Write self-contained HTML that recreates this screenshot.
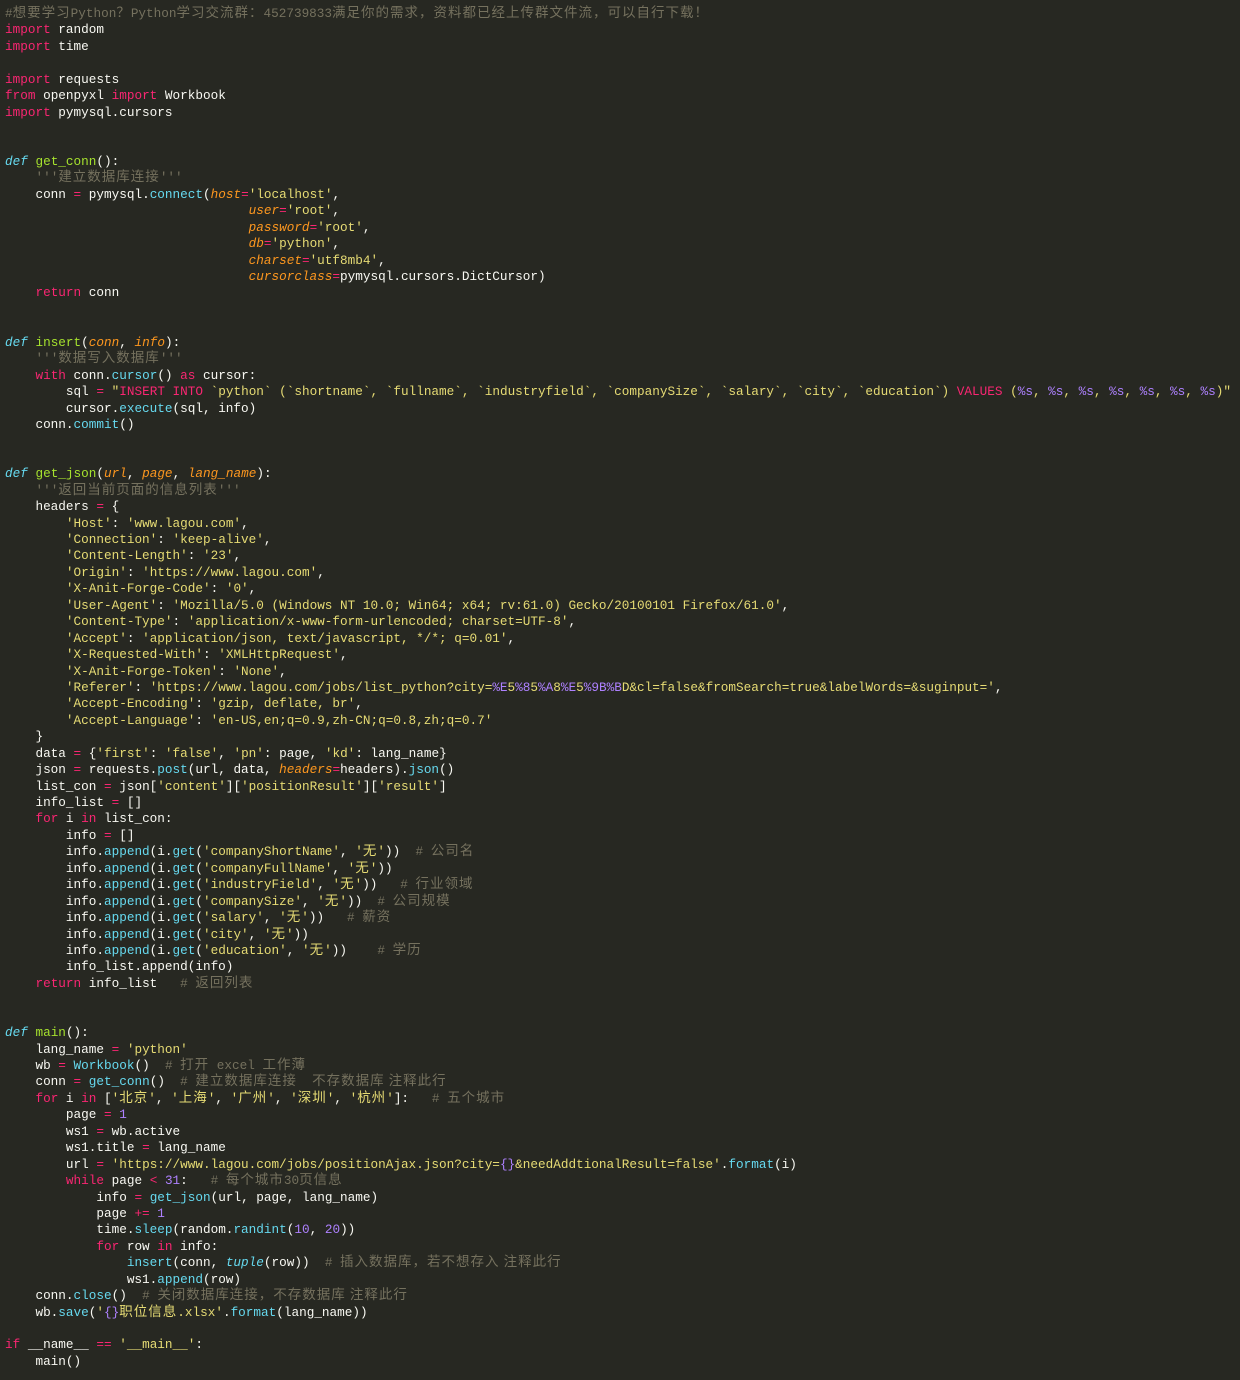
<!DOCTYPE html>
<html><head><meta charset="utf-8"><style>
html,body{margin:0;padding:0;background:#272822;width:1240px;height:1380px;overflow:hidden}
pre{margin:0;padding:6px 0 0 5px;font-family:"Liberation Mono","Noto Sans CJK SC",monospace;font-size:12.7px;line-height:16.44px;color:#f8f8f2;white-space:pre}
.k{color:#f92672}.b{color:#66d9ef}.s{color:#e6db74}.c{color:#75715e}.d{color:#66d9ef;font-style:italic}.f{color:#a6e22e}.p{color:#fd971f;font-style:italic}.n{color:#ae81ff}
.z{font-family:"Noto Sans CJK SC",sans-serif;font-size:13.5px;letter-spacing:1px;line-height:10px}
</style></head><body><pre><span class="c">#<span class="z">想要学习</span>Python<span class="z">？</span>Python<span class="z">学习交流群：</span>452739833<span class="z">满足你的需求，资料都已经上传群文件流，可以自行下载！</span></span>
<span class="k">import</span> random
<span class="k">import</span> time

<span class="k">import</span> requests
<span class="k">from</span> openpyxl <span class="k">import</span> Workbook
<span class="k">import</span> pymysql.cursors


<span class="d">def</span> <span class="f">get_conn</span>():
    <span class="c">'''<span class="z">建立数据库连接</span>'''</span>
    conn <span class="k">=</span> pymysql.<span class="b">connect</span>(<span class="p">host</span><span class="k">=</span><span class="s">'localhost'</span>,
                                <span class="p">user</span><span class="k">=</span><span class="s">'root'</span>,
                                <span class="p">password</span><span class="k">=</span><span class="s">'root'</span>,
                                <span class="p">db</span><span class="k">=</span><span class="s">'python'</span>,
                                <span class="p">charset</span><span class="k">=</span><span class="s">'utf8mb4'</span>,
                                <span class="p">cursorclass</span><span class="k">=</span>pymysql.cursors.DictCursor)
    <span class="k">return</span> conn


<span class="d">def</span> <span class="f">insert</span>(<span class="p">conn</span>, <span class="p">info</span>):
    <span class="c">'''<span class="z">数据写入数据库</span>'''</span>
    <span class="k">with</span> conn.<span class="b">cursor</span>() <span class="k">as</span> cursor:
        sql <span class="k">=</span> <span class="s">"<span class="k">INSERT INTO</span> `python` (`shortname`, `fullname`, `industryfield`, `companySize`, `salary`, `city`, `education`) <span class="k">VALUES</span> (<span class="n">%s</span>, <span class="n">%s</span>, <span class="n">%s</span>, <span class="n">%s</span>, <span class="n">%s</span>, <span class="n">%s</span>, <span class="n">%s</span>)"</span>
        cursor.<span class="b">execute</span>(sql, info)
    conn.<span class="b">commit</span>()


<span class="d">def</span> <span class="f">get_json</span>(<span class="p">url</span>, <span class="p">page</span>, <span class="p">lang_name</span>):
    <span class="c">'''<span class="z">返回当前页面的信息列表</span>'''</span>
    headers <span class="k">=</span> {
        <span class="s">'Host'</span>: <span class="s">'www.lagou.com'</span>,
        <span class="s">'Connection'</span>: <span class="s">'keep-alive'</span>,
        <span class="s">'Content-Length'</span>: <span class="s">'23'</span>,
        <span class="s">'Origin'</span>: <span class="s">'https://www.lagou.com'</span>,
        <span class="s">'X-Anit-Forge-Code'</span>: <span class="s">'0'</span>,
        <span class="s">'User-Agent'</span>: <span class="s">'Mozilla/5.0 (Windows NT 10.0; Win64; x64; rv:61.0) Gecko/20100101 Firefox/61.0'</span>,
        <span class="s">'Content-Type'</span>: <span class="s">'application/x-www-form-urlencoded; charset=UTF-8'</span>,
        <span class="s">'Accept'</span>: <span class="s">'application/json, text/javascript, */*; q=0.01'</span>,
        <span class="s">'X-Requested-With'</span>: <span class="s">'XMLHttpRequest'</span>,
        <span class="s">'X-Anit-Forge-Token'</span>: <span class="s">'None'</span>,
        <span class="s">'Referer'</span>: <span class="s">'https://www.lagou.com/jobs/list_python?city=<span class="n">%E</span>5<span class="n">%8</span>5<span class="n">%A</span>8<span class="n">%E</span>5<span class="n">%9B</span><span class="n">%B</span>D&amp;cl=false&amp;fromSearch=true&amp;labelWords=&amp;suginput='</span>,
        <span class="s">'Accept-Encoding'</span>: <span class="s">'gzip, deflate, br'</span>,
        <span class="s">'Accept-Language'</span>: <span class="s">'en-US,en;q=0.9,zh-CN;q=0.8,zh;q=0.7'</span>
    }
    data <span class="k">=</span> {<span class="s">'first'</span>: <span class="s">'false'</span>, <span class="s">'pn'</span>: page, <span class="s">'kd'</span>: lang_name}
    json <span class="k">=</span> requests.<span class="b">post</span>(url, data, <span class="p">headers</span><span class="k">=</span>headers).<span class="b">json</span>()
    list_con <span class="k">=</span> json[<span class="s">'content'</span>][<span class="s">'positionResult'</span>][<span class="s">'result'</span>]
    info_list <span class="k">=</span> []
    <span class="k">for</span> i <span class="k">in</span> list_con:
        info <span class="k">=</span> []
        info.<span class="b">append</span>(i.<span class="b">get</span>(<span class="s">'companyShortName'</span>, <span class="s">'<span class="z">无</span>'</span>))  <span class="c"># <span class="z">公司名</span></span>
        info.<span class="b">append</span>(i.<span class="b">get</span>(<span class="s">'companyFullName'</span>, <span class="s">'<span class="z">无</span>'</span>))
        info.<span class="b">append</span>(i.<span class="b">get</span>(<span class="s">'industryField'</span>, <span class="s">'<span class="z">无</span>'</span>))   <span class="c"># <span class="z">行业领域</span></span>
        info.<span class="b">append</span>(i.<span class="b">get</span>(<span class="s">'companySize'</span>, <span class="s">'<span class="z">无</span>'</span>))  <span class="c"># <span class="z">公司规模</span></span>
        info.<span class="b">append</span>(i.<span class="b">get</span>(<span class="s">'salary'</span>, <span class="s">'<span class="z">无</span>'</span>))   <span class="c"># <span class="z">薪资</span></span>
        info.<span class="b">append</span>(i.<span class="b">get</span>(<span class="s">'city'</span>, <span class="s">'<span class="z">无</span>'</span>))
        info.<span class="b">append</span>(i.<span class="b">get</span>(<span class="s">'education'</span>, <span class="s">'<span class="z">无</span>'</span>))    <span class="c"># <span class="z">学历</span></span>
        info_list.append(info)
    <span class="k">return</span> info_list   <span class="c"># <span class="z">返回列表</span></span>


<span class="d">def</span> <span class="f">main</span>():
    lang_name <span class="k">=</span> <span class="s">'python'</span>
    wb <span class="k">=</span> <span class="b">Workbook</span>()  <span class="c"># <span class="z">打开</span> excel <span class="z">工作薄</span></span>
    conn <span class="k">=</span> <span class="b">get_conn</span>()  <span class="c"># <span class="z">建立数据库连接</span>  <span class="z">不存数据库 注释此行</span></span>
    <span class="k">for</span> i <span class="k">in</span> [<span class="s">'<span class="z">北京</span>'</span>, <span class="s">'<span class="z">上海</span>'</span>, <span class="s">'<span class="z">广州</span>'</span>, <span class="s">'<span class="z">深圳</span>'</span>, <span class="s">'<span class="z">杭州</span>'</span>]:   <span class="c"># <span class="z">五个城市</span></span>
        page <span class="k">=</span> <span class="n">1</span>
        ws1 <span class="k">=</span> wb.active
        ws1.title <span class="k">=</span> lang_name
        url <span class="k">=</span> <span class="s">'https://www.lagou.com/jobs/positionAjax.json?city=<span class="n">{}</span>&amp;needAddtionalResult=false'</span>.<span class="b">format</span>(i)
        <span class="k">while</span> page <span class="k">&lt;</span> <span class="n">31</span>:   <span class="c"># <span class="z">每个城市</span>30<span class="z">页信息</span></span>
            info <span class="k">=</span> <span class="b">get_json</span>(url, page, lang_name)
            page <span class="k">+=</span> <span class="n">1</span>
            time.<span class="b">sleep</span>(random.<span class="b">randint</span>(<span class="n">10</span>, <span class="n">20</span>))
            <span class="k">for</span> row <span class="k">in</span> info:
                <span class="b">insert</span>(conn, <span class="d">tuple</span>(row))  <span class="c"># <span class="z">插入数据库，若不想存入 注释此行</span></span>
                ws1.<span class="b">append</span>(row)
    conn.<span class="b">close</span>()  <span class="c"># <span class="z">关闭数据库连接，不存数据库 注释此行</span></span>
    wb.<span class="b">save</span>(<span class="s">'<span class="n">{}</span><span class="z">职位信息</span>.xlsx'</span>.<span class="b">format</span>(lang_name))

<span class="k">if</span> __name__ <span class="k">==</span> <span class="s">'__main__'</span>:
    main()</pre></body></html>
